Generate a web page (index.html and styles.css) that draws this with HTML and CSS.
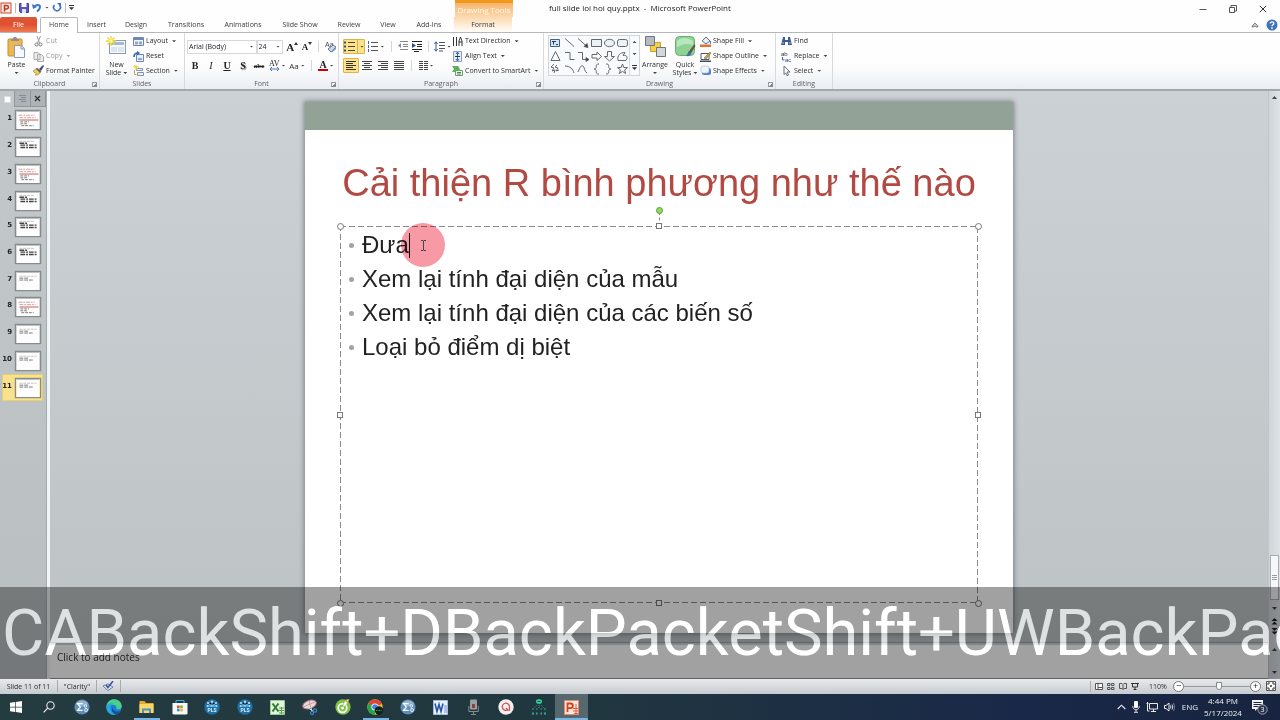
FILE: index.html
```html
<!DOCTYPE html>
<html lang="en">
<head>
<meta charset="utf-8">
<title>full slide loi hoi quy.pptx - Microsoft PowerPoint</title>
<link rel="stylesheet" href="styles.css">
</head>
<body>
<svg class="defs" aria-hidden="true">
  <symbol id="pls" viewBox="0 0 16 16"><circle cx="8" cy="8" r="7.7" fill="#1d6fa5"/><g stroke="#8fd0f0" stroke-width="1"><path d="M8 2v6M4 4l4 3 4-3M3 7h10"/></g><g fill="#a8def5"><circle cx="8" cy="2.6" r="1.2"/><circle cx="4" cy="4" r="1.1"/><circle cx="12" cy="4" r="1.1"/><circle cx="3.5" cy="7" r="1"/><circle cx="12.5" cy="7" r="1"/></g><text x="8" y="13.4" font-size="5" font-weight="700" text-anchor="middle" fill="#d8f0fb" font-family="Roboto, sans-serif">PLS</text></symbol>
  <symbol id="sigma" viewBox="0 0 16 16"><circle cx="8" cy="8" r="7.6" fill="#5f8eb8"/><path d="M2 5a7 7 0 0 1 12 0c-3 3-9 3-12 0z" fill="#a9c6de" opacity=".7"/><path d="M8.600 4.600H3.600L6.400 8l-2.800 3.400h5" fill="none" stroke="#fff" stroke-width="1.200"/><g fill="none" stroke="#e4eff8"><circle cx="11.400" cy="7" r="1.300"/><circle cx="12" cy="11" r="1.500"/></g></symbol>
  <symbol id="th-red" viewBox="0 0 24 19"><rect width="24" height="19" fill="#fdfdfd"/><path d="M0 .5h24" stroke="#b5bbb8"/><path d="M2 4.500h17M3 7h17" stroke="#d69a98" stroke-dasharray="4 1 2 1"/><path d="M3 9.500h20" stroke="#bd5653"/><path d="M4 11.500h9M4 13.500h8M5 15.500h13" stroke="#777" stroke-dasharray="3 1"/></symbol>
  <symbol id="th-text" viewBox="0 0 24 19"><rect width="24" height="19" fill="#fdfdfd"/><path d="M0 .5h24" stroke="#b5bbb8"/><path d="M3 3.500h15" stroke="#c3b5b5" stroke-dasharray="3 1"/><path d="M3 5.500h9M4 7.500h17M4 10h18" stroke="#444" stroke-width="1.500" stroke-dasharray="5 1 2 1"/></symbol>
  <symbol id="th-light" viewBox="0 0 24 19"><rect width="24" height="19" fill="#fdfdfd"/><path d="M0 .5h24" stroke="#b5bbb8"/><path d="M3 4.500h18" stroke="#cbbcbc" stroke-dasharray="3 1"/><path d="M3 6.500h9M3 8.500h14" stroke="#777" stroke-dasharray="4 1"/></symbol>
</svg>

<header class="titlebar">
  <div class="title-left">
    <div class="quick">
      <svg width="12" height="12" viewBox="0 0 12 12"><rect x="1" y="1" width="10" height="10" fill="#fbe9e4" stroke="#c6492c"/><path d="M4.500 9.500V3.500h2.200a1.700 1.700 0 0 1 0 3.400H4.500" fill="none" stroke="#c23a1c" stroke-width="1.500"/></svg>
      <i class="qsep"></i>
      <button class="plain" aria-label="Save"><svg width="10" height="10" viewBox="0 0 10 10"><path d="M.5.5h9v9h-8l-1-1z" fill="#5b57b5" stroke="#45419a"/><path d="M2.500 0h5v4h-5z" fill="#fff"/><path d="M3 6h4v4H3z" fill="#dfe4f5"/></svg></button>
      <button class="plain" aria-label="Undo"><svg width="10" height="10" viewBox="0 0 10 10"><path d="M2 4c2-3 6-2.500 6 0 0 2-1 3-3 4.500" fill="none" stroke="#3d74c4" stroke-width="2"/><path d="M0 1l1 5 4-2z" fill="#3d74c4"/></svg></button>
      <i class="caret"></i>
      <button class="plain" aria-label="Redo"><svg width="10" height="10" viewBox="0 0 10 10"><path d="M2.500 2a3.400 3.400 0 1 0 5 0" fill="none" stroke="#3d74c4" stroke-width="1.700"/><path d="M5 0h4v4z" fill="#3d74c4"/></svg></button>
      <i class="qsep"></i>
      <i class="caret lined"></i>
    </div>
    <div class="context">Drawing Tools</div>
  </div>
  <div class="doc-title">full slide loi hoi quy.pptx &nbsp;-&nbsp; Microsoft PowerPoint</div>
  <div class="window-buttons">
    <button class="plain" aria-label="Minimize"><svg width="8" height="8" viewBox="0 0 8 8"><path d="M.5 4.500h7" stroke="#555"/></svg></button>
    <button class="plain" aria-label="Restore"><svg width="8" height="8" viewBox="0 0 8 8"><path d="M.5 2.500h5v5h-5zM2 2V.5h5.500V6H6" fill="none" stroke="#555"/></svg></button>
    <button class="plain" aria-label="Close"><svg width="8" height="8" viewBox="0 0 8 8"><path d="M.8.800l6.400 6.400M7.200.800L.8 7.200" stroke="#333"/></svg></button>
  </div>
</header>

<nav class="tabs">
  <button class="tab file">File</button>
  <button class="tab home">Home</button>
  <button class="tab w37">Insert</button>
  <button class="tab w42">Design</button>
  <button class="tab w58">Transitions</button>
  <button class="tab w56">Animations</button>
  <button class="tab w58">Slide Show</button>
  <button class="tab w40">Review</button>
  <button class="tab w38">View</button>
  <button class="tab w44">Add-Ins</button>
  <button class="tab format">Format</button>
  <div class="tabs-end">
    <svg width="8" height="6" viewBox="0 0 8 6"><path d="M1 4.500L4 1.200l3 3.300c-1 .8-1.500.5-3-.7-1.500 1.200-2 1.500-3 .7z" fill="none" stroke="#555"/></svg>
    <svg width="12" height="12" viewBox="0 0 12 12"><circle cx="6" cy="6" r="5.500" fill="#3f74bd"/><path d="M4.200 4.600c0-2.400 3.600-2.300 3.600-.2 0 1.300-1.800 1.300-1.800 2.800" fill="none" stroke="#fff" stroke-width="1.300"/><circle cx="6" cy="9.100" r=".9" fill="#fff"/></svg>
  </div>
</nav>

<main class="ribbon">
  <section class="group g-clip">
    <div class="g-body">
      <button class="big"><svg width="19" height="22" viewBox="0 0 19 22"><rect x="1" y="3" width="14" height="17" rx="1" fill="#edb64f" stroke="#c98e2d"/><path d="M4 5V3h2c0-3 4-3 4 0h2v2z" fill="#8c8f94"/><path d="M7.500 9.500h7l3 3v9h-10z" fill="#f7fafd" stroke="#8b9db3"/><path d="M14 9.500v3.500h3.500" fill="#cfd9e6" stroke="#8b9db3"/></svg><span>Paste</span><i class="caret"></i></button>
      <div class="col">
        <button class="item off"><svg width="11" height="11" viewBox="0 0 11 11"><path d="M4 0l2.500 7M7.500 0L4.500 7" stroke="#999" fill="none"/><circle cx="3.500" cy="8.500" r="1.500" fill="none" stroke="#777"/><circle cx="7.500" cy="8.500" r="1.500" fill="none" stroke="#777"/></svg>Cut</button>
        <button class="item off"><svg width="11" height="11" viewBox="0 0 11 11"><path d="M1 1.500h4l2 2v5H1zM4.500 3.500h4l2 2v5h-6z" fill="#ececec" stroke="#aaa"/></svg>Copy<i class="caret"></i></button>
        <button class="item"><svg width="11" height="11" viewBox="0 0 11 11"><path d="M6 4l4-4 1 1-3 5z" fill="#3b4f74"/><path d="M0 6l4-3 4 3c-1 3-3 4.500-6 4 2-1 2-2 0-2z" fill="#efcd54" stroke="#9b842c" stroke-width=".6"/><path d="M4 3l4 3-1 2-4-4z" fill="#55627b"/></svg>Format Painter</button>
      </div>
    </div>
    <footer>Clipboard<i class="launch"></i></footer>
  </section>

  <section class="group g-slides">
    <div class="g-body">
      <button class="big"><svg width="21" height="22" viewBox="0 0 21 22"><rect x="3.500" y="4.500" width="16" height="13" fill="#f6f9fc" stroke="#8c9cb0"/><path d="M5 6h13v3H5z" fill="#a8b9d2"/><path d="M5 11h6v5H5zM12 11h6v5h-6z" fill="#dce4ee"/><path d="M5 0v10M0 5h10M1.500 1.500l7 7M8.500 1.500l-7 7" stroke="#f0d52c" stroke-width="1.300"/><circle cx="5" cy="5" r="1.800" fill="#fff8ae"/></svg><span>New</span><span class="row">Slide<i class="caret"></i></span></button>
      <div class="col">
        <button class="item"><svg width="11" height="11" viewBox="0 0 11 11"><path d="M.5 1.500h10v8H.5z" fill="#f2f6fb" stroke="#7288aa"/><path d="M1 2h9v2H1z" fill="#7288aa"/><path d="M2 5.500h3v3H2zM6 5.500h3v3H6z" fill="#8da9d2"/></svg>Layout<i class="caret"></i></button>
        <button class="item"><svg width="11" height="11" viewBox="0 0 11 11"><path d="M3.500 3.500h7v7h-7z" fill="#e9f0f8" stroke="#7288aa"/><path d="M5 7h4v2H5z" fill="#88a8d5"/><path d="M1 6c0-3 1-4 4-4" fill="none" stroke="#2f66b8" stroke-width="1.700"/><path d="M4 0l3 2-3 2.500z" fill="#2f66b8"/></svg>Reset</button>
        <button class="item"><svg width="11" height="11" viewBox="0 0 11 11"><path d="M3.500 3.500h6v2h-6zM4.500 7.500h6v3h-6z" fill="#e9f0f8" stroke="#8294af"/><path d="M0 2h6M3 0v5M1 0l4 4" stroke="#e9cf35"/><path d="M1.500 5v4.500h2" stroke="#caa73c" fill="none"/></svg>Section<i class="caret"></i></button>
      </div>
    </div>
    <footer>Slides</footer>
  </section>

  <section class="group g-font">
    <div class="g-body stack">
      <div class="frow">
        <label class="combo fam"><select aria-label="Font"><option>Arial (Body)</option></select><i class="caret"></i></label>
        <label class="combo size"><select aria-label="Font size"><option>24</option></select><i class="caret"></i></label>
        <button class="cell w15 serif grow" aria-label="Grow font">A<svg width="4" height="4" viewBox="0 0 4 4"><path d="M0 3l2-3 2 3z" fill="#333"/></svg></button>
        <button class="cell w15 serif shrink" aria-label="Shrink font">A<svg width="4" height="4" viewBox="0 0 4 4"><path d="M0 0l2 3 2-3z" fill="#333"/></svg></button>
        <i class="vsep"></i>
        <button class="cell w15" aria-label="Clear formatting"><svg width="12" height="12" viewBox="0 0 12 12"><text x="0" y="6" font-size="7" font-family="Liberation Sans, sans-serif" fill="#444">Aa</text><path d="M3 8l5-4 3 2-5 5z" fill="#c9d8ec" stroke="#5b779e"/><path d="M6 10.500l5-4.500v2l-4 3.500z" fill="#7794bb"/></svg></button>
      </div>
      <div class="frow">
        <button class="cell w16 serif b">B</button>
        <button class="cell w16 serif i">I</button>
        <button class="cell w16 serif u">U</button>
        <button class="cell w16 serif s">S</button>
        <button class="cell w16 serif st">abc</button>
        <button class="cell w20" aria-label="Character spacing"><svg width="11" height="11" viewBox="0 0 11 11"><text x="0" y="6" font-size="8" font-family="Liberation Serif, serif" fill="#222">AV</text><path d="M1 9h9M3 7L1 9l2 2M8 7l2 2-2 2" stroke="#4a78b9" fill="none"/></svg><i class="caret"></i></button>
        <button class="cell w20 case">Aa<i class="caret"></i></button>
        <i class="vsep"></i>
        <button class="cell w20 serif color"><span>A</span><i class="caret"></i></button>
      </div>
    </div>
    <footer>Font<i class="launch"></i></footer>
  </section>

  <section class="group g-para">
    <div class="g-body">
      <div class="stack para-left">
        <div class="frow">
          <button class="cell hot w23" aria-label="Bullets"><svg width="11" height="11" viewBox="0 0 11 11"><path d="M4 1.500h7M4 5.500h7M4 9.500h7" stroke="#444"/><path d="M0 .5h2v2H0zM0 4.500h2v2H0zM0 8.500h2v2H0z" fill="#3b4d78"/></svg><i class="split"></i><i class="caret"></i></button>
          <button class="cell w23" aria-label="Numbering"><svg width="11" height="11" viewBox="0 0 11 11"><path d="M4 1.500h7M4 5.500h7M4 9.500h7" stroke="#555"/><path d="M1.500 0v3M1.500 4v3M1.500 8v3" stroke="#3c68b0"/></svg><i class="caret"></i></button>
          <i class="vsep"></i>
          <button class="cell w15" aria-label="Decrease indent"><svg width="11" height="11" viewBox="0 0 11 11"><path d="M3 .5h8M6 3.500h5M6 5.500h5M3 8.500h8" stroke="#888"/><path d="M4 2L1 4.500 4 7z" fill="#7a8fb3"/></svg></button>
          <button class="cell w15" aria-label="Increase indent"><svg width="11" height="11" viewBox="0 0 11 11"><path d="M1 .5h10M6 3.500h5M6 5.500h5M1 8.500h10M3 10.500h5" stroke="#222"/><path d="M1 2l4 2.500L1 7z" fill="#264e91"/></svg></button>
          <i class="vsep"></i>
          <button class="cell w20" aria-label="Line spacing"><svg width="11" height="11" viewBox="0 0 11 11"><path d="M5 1.500h6M5 4.500h6M5 7.500h6M5 10h4" stroke="#555"/><path d="M2 1v9M.3 3L2 .8 3.700 3M.3 8L2 10.200 3.700 8" stroke="#2f5ca8" fill="none"/></svg><i class="caret"></i></button>
        </div>
        <div class="frow">
          <button class="cell hot w16" aria-label="Align left"><svg width="10" height="9" viewBox="0 0 10 9"><path d="M0 .5h10M0 2.500h7M0 4.500h10M0 6.500h7M0 8.500h10" stroke="#333"/></svg></button>
          <button class="cell w16" aria-label="Center"><svg width="10" height="9" viewBox="0 0 10 9"><path d="M0 .5h10M2 2.500h6M0 4.500h10M2 6.500h6M0 8.500h10" stroke="#444"/></svg></button>
          <button class="cell w16" aria-label="Align right"><svg width="10" height="9" viewBox="0 0 10 9"><path d="M0 .5h10M3 2.500h7M0 4.500h10M3 6.500h7M0 8.500h10" stroke="#444"/></svg></button>
          <button class="cell w16" aria-label="Justify"><svg width="10" height="9" viewBox="0 0 10 9"><path d="M0 .5h10M0 2.500h10M0 4.500h10M0 6.500h10M0 8.500h10" stroke="#444"/></svg></button>
          <i class="vsep"></i>
          <button class="cell w20" aria-label="Columns"><svg width="9" height="9" viewBox="0 0 9 9"><path d="M0 .5h4M0 2.500h4M0 4.500h4M0 6.500h4M0 8.500h4M5 .5h4M5 2.500h4M5 4.500h4M5 6.500h4M5 8.500h4" stroke="#444"/></svg><i class="caret"></i></button>
        </div>
      </div>
      <div class="col">
        <button class="item"><svg width="11" height="11" viewBox="0 0 11 11"><path d="M1.500 1v9M4.500 1v9" stroke="#333"/><path d="M7 10V5l1.500-4L10 5v5M7 6h3" stroke="#333" fill="none"/></svg>Text Direction<i class="caret"></i></button>
        <button class="item"><svg width="11" height="11" viewBox="0 0 11 11"><path d="M1.500.5h8v10h-8z" fill="#e2ebf6" stroke="#8ca0bf"/><path d="M5.500 1v9M4 3l1.500-2L7 3M4 8l1.500 2L7 8" stroke="#376bb5" fill="none"/><path d="M3 5.500h5" stroke="#333"/></svg>Align Text<i class="caret"></i></button>
        <button class="item"><svg width="11" height="11" viewBox="0 0 11 11"><path d="M0 1h6l2 3-2 3H0l2-3z" fill="#5fae59"/><path d="M3.500 5.500h7v5h-7z" fill="#f1f5fa" stroke="#6fa06c"/><path d="M5 7.500h4M5 9h4" stroke="#4d8b4a"/></svg>Convert to SmartArt<i class="caret"></i></button>
      </div>
    </div>
    <footer>Paragraph<i class="launch"></i></footer>
  </section>

  <section class="group g-draw">
    <div class="g-body">
      <div class="gallery">
        <svg width="80" height="39" viewBox="0 0 80 39" fill="none" stroke="#666">
          <path d="M1.500 3.500h9v7h-9z" fill="#d8e4f2" stroke="#466087"/><path d="M3 5.500h4M4.500 5.500v3M7 8.500h2" stroke="#253f6c"/>
          <path d="M16 2.500l9 8M29 2.500l9 8"/><path d="M39 11.500l-4-1 3-3z" fill="#333"/>
          <path d="M42.500 3.500h10v7h-10z" fill="#e9f1f9"/><ellipse cx="60.500" cy="7" rx="5" ry="3.700" fill="#e9f1f9"/><rect x="68.500" y="3.500" width="10" height="7" rx="2" fill="#e9f1f9"/>
          <path d="M6.500 15.500l4.500 9H2zM16 16.500h5v7h4.500M29 16.500h4.500v7H38"/><path d="M37 21.500l3 2-3 2z" fill="#333"/>
          <path d="M43 18.500h5v-2.500l4.500 4.500-4.500 4v-2.500h-5zM58.500 15.500h4v5h3l-5 4.500-5-4.500h3zM69 24.500c-1-5 2-8 7-8l-2 3c4-1 5 2 3 5z"/>
          <path d="M5 28l-3 3 3 1-2 3 3-1-1 3M8 29l-2 2 3 1-2 3 3-1M16 30c5 0 8 3 9 7M29 36c1-2 3-8 5-6s1 5 4 7M50 28c-4 0-2 2-3 4-.5 1-2 1-2 1s1.500 0 2 1c1 2-1 4 3 4M57 28c4 0 2 2 3 4 .5 1 2 1 2 1s-1.500 0-2 1c-1 2 1 4-3 4"/><path d="M73.500 28l1.300 3.500 3.700.1-2.900 2.300 1 3.600-3.100-2.100-3.100 2.100 1-3.600-2.900-2.300 3.700-.1z"/>
        </svg>
        <div class="gal-scroll"><i class="caret up"></i><i class="caret"></i><i class="caret lined"></i></div>
      </div>
      <button class="big w30"><svg width="21" height="22" viewBox="0 0 21 22"><path d="M5.500 6.500h10v9h-10z" fill="#f3cf4a" stroke="#c9a12c"/><path d="M.5.500h9v9h-9z" fill="#b7babf" stroke="#70757c"/><path d="M11.500 11.500h9v9h-9z" fill="#d4d7dc" stroke="#70757c"/></svg><span>Arrange</span><i class="caret"></i></button>
      <button class="big w30"><svg width="21" height="22" viewBox="0 0 21 22"><rect x=".5" y=".5" width="19" height="19" rx="4" fill="#8ed394" stroke="#66b26c"/><path d="M2 5c5-4 10-4 16 0v4C12 7 8 8 2 11z" fill="#b9e7bd"/><path d="M19.500 8l-6 8 2 2 5-8z" fill="#69573f"/><path d="M14 15l2.500 2c-1 3-3 3.500-6 3 2-1 2-3 3.500-5z" fill="#41719f"/></svg><span>Quick</span><span class="row">Styles<i class="caret"></i></span></button>
      <div class="col">
        <button class="item"><svg width="11" height="11" viewBox="0 0 11 11"><path d="M2 5l4-4 4 4-4 3z" fill="#e9eef5" stroke="#5f6f88"/><path d="M9 4c2 1 2 3 1 4" stroke="#3f70b8" fill="none"/><path d="M0 8.500h11V11H0z" fill="#e0742c"/></svg>Shape Fill<i class="caret"></i></button>
        <button class="item"><svg width="11" height="11" viewBox="0 0 11 11"><path d="M1 2.500h8v6H1z" fill="#fff" stroke="#556"/><path d="M4 7l6-6 1 1-5 6z" fill="#d9a53a" stroke="#6b5733" stroke-width=".5"/><path d="M0 9.500h11V11H0z" fill="#394e62"/></svg>Shape Outline<i class="caret"></i></button>
        <button class="item"><svg width="11" height="11" viewBox="0 0 11 11"><rect x="2" y="3" width="9" height="7" rx="2" fill="#5784c9"/><rect x="1" y="1" width="8" height="7" rx="2" fill="#f0f4fa" stroke="#9db3d4" stroke-width=".6"/></svg>Shape Effects<i class="caret"></i></button>
      </div>
    </div>
    <footer>Drawing<i class="launch"></i></footer>
  </section>

  <section class="group g-edit">
    <div class="g-body">
      <div class="col">
        <button class="item"><svg width="11" height="11" viewBox="0 0 11 11"><path d="M2 1h2v3h3V1h2l2 8H7V6H4v3H0z" fill="#3a5c93"/><path d="M1 7h2M8 7h2" stroke="#a8c0e2"/></svg>Find</button>
        <button class="item"><svg width="11" height="11" viewBox="0 0 11 11"><text x="0" y="5" font-size="6" font-family="Liberation Sans, sans-serif" fill="#333">ab</text><text x="4" y="11" font-size="6" font-family="Liberation Sans, sans-serif" fill="#274f8f">ac</text><path d="M1.500 6v3h2" stroke="#3a69ad" fill="none"/></svg>Replace<i class="caret"></i></button>
        <button class="item"><svg width="11" height="11" viewBox="0 0 11 11"><path d="M3 1l6 6H6l1.500 3-1.500.7L4.700 8 3 9.500z" fill="#fff" stroke="#66707e"/></svg>Select<i class="caret"></i></button>
      </div>
    </div>
    <footer>Editing</footer>
  </section>
</main>

<div class="work">
  <aside class="outline">
    <div class="pane-tabs">
      <button class="on" aria-label="Slides"><svg width="7" height="7" viewBox="0 0 7 7"><path d="M.5.500h6v6h-6z" fill="#fff" stroke="#d9dcde"/></svg></button>
      <button aria-label="Outline"><svg width="7" height="7" viewBox="0 0 7 7"><path d="M0 .5h7M2 2.500h5M0 4.500h7M2 6.500h5" stroke="#858b90"/></svg></button>
      <button aria-label="Close pane"><svg width="7" height="7" viewBox="0 0 7 7"><path d="M1 1l5 5M6 1L1 6" stroke="#333" stroke-width="1.300"/></svg></button>
    </div>
    <ol class="thumbs">
      <li><b>1</b><svg><use href="#th-red"/></svg></li>
      <li><b>2</b><svg><use href="#th-text"/></svg></li>
      <li><b>3</b><svg><use href="#th-red"/></svg></li>
      <li><b>4</b><svg><use href="#th-text"/></svg></li>
      <li><b>5</b><svg><use href="#th-text"/></svg></li>
      <li><b>6</b><svg><use href="#th-text"/></svg></li>
      <li><b>7</b><svg><use href="#th-light"/></svg></li>
      <li><b>8</b><svg><use href="#th-red"/></svg></li>
      <li><b>9</b><svg><use href="#th-light"/></svg></li>
      <li><b>10</b><svg><use href="#th-light"/></svg></li>
      <li class="current"><b>11</b><svg><use href="#th-light"/></svg></li>
    </ol>
  </aside>
  <div class="editor">
    <div class="canvas">
      <article class="slide">
        <div class="band"></div>
        <h1>Cải thiện R bình phương như thế nào</h1>
        <div class="placeholder">
          <svg class="frame" width="100%" height="100%" aria-hidden="true"><rect width="100%" height="100%" fill="none" stroke="#8a8a8a" stroke-width="2" stroke-dasharray="6 3"/></svg>
          <ul>
            <li>Đưa<i class="text-caret"></i></li>
            <li>Xem lại tính đại diện của mẫu</li>
            <li>Xem lại tính đại diện của các biến số</li>
            <li>Loại bỏ điểm dị biệt</li>
          </ul>
          <i class="stem"></i><i class="h rot"></i>
          <i class="h round tl"></i><i class="h tc"></i><i class="h round tr"></i>
          <i class="h ml"></i><i class="h mr"></i>
          <i class="h round bl"></i><i class="h bc"></i><i class="h round br"></i>
          <div class="pointer"><svg width="7" height="11" viewBox="0 0 7 11"><path d="M1 .5h2l.5.500.5-.5h2M3.500 1v9M1 10.500h2l.5-.5.5.500h2" fill="none" stroke="#444"/></svg></div>
        </div>
      </article>
    </div>
    <div class="notes">Click to add notes</div>
  </div>
  <div class="scroll">
    <i class="caret up big-caret"></i>
    <div class="thumb"><svg width="5" height="6" viewBox="0 0 5 6"><path d="M0 .5h5M0 2.500h5M0 4.500h5" stroke="#999"/></svg></div>
    <i class="caret big-caret"></i>
    <svg width="7" height="18" viewBox="0 0 7 18"><path d="M.5 4l3-3 3 3zM.5 7.500l3-3 3 3zM.5 11l3 3 3-3zM.5 14.500l3 3 3-3z" fill="#222"/></svg>
    <div class="notes-scroll"><i class="caret up big-caret"></i><i class="caret big-caret"></i></div>
  </div>
</div>

<div class="keys">+CABackShift+DBackPacketShift+UWBackPac</div>

<footer class="status">
  <span class="s1">Slide 11 of 11</span>
  <span class="s2">"Clarity"</span>
  <span class="s3"><svg width="11" height="10" viewBox="0 0 11 10"><path d="M0 5l5-2 5 3-5 3.500z" fill="#dfe5f1" stroke="#6a7ba6"/><path d="M3 4l2 2.500L10 0" fill="none" stroke="#3b4fa0" stroke-width="1.500"/></svg></span>
  <div class="views">
    <svg width="8" height="7" viewBox="0 0 8 7"><path d="M.5.500h7v6h-7zM3 .5v6M3 4.500h4.500" fill="#fff" stroke="#555"/></svg>
    <svg width="8" height="7" viewBox="0 0 8 7"><path d="M.5.500h2.500v2H.5zM4.500.500H7v2H4.500zM.5 4.500h2.500v2H.5zM4.500 4.500H7v2H4.500z" fill="none" stroke="#555"/></svg>
    <svg width="8" height="7" viewBox="0 0 8 7"><path d="M.5.500h2.500l1 1 1-1h2.500v5H5l-1 1-1-1H.5zM4 1.500v5" fill="none" stroke="#555"/></svg>
    <svg width="8" height="7" viewBox="0 0 8 7"><path d="M0 .5h8M1.500 1v3h5V1M4 4v2.500M2.500 6.500h3" fill="none" stroke="#333"/></svg>
  </div>
  <span class="pct">110%</span>
  <button class="zoomb" aria-label="Zoom out">−</button>
  <input type="range" min="10" max="100" value="58" aria-label="Zoom">
  <button class="zoomb" aria-label="Zoom in">+</button>
  <button class="plain fit" aria-label="Fit slide"><svg width="10" height="10" viewBox="0 0 10 10"><path d="M.5.500h9v9h-9z" fill="#fff" stroke="#555"/><path d="M2 4V2h2M6 2h2v2M8 6v2H6M4 8H2V6M4 5h2M5 4v2" stroke="#333" fill="none"/></svg></button>
</footer>

<div class="taskbar">
  <div class="apps">
    <button aria-label="Start"><svg width="12" height="12" viewBox="0 0 12 12"><path d="M0 1.700l5.300-.7v4.700H0zM6 .9L12 0v5.700H6zM0 6.400h5.300V11L0 10.300zM6 6.400h6V12l-6-.9z" fill="#fff"/></svg></button>
    <button aria-label="Search"><svg width="12" height="12" viewBox="0 0 12 12"><circle cx="7.500" cy="4.500" r="3.700" fill="none" stroke="#eee" stroke-width="1.100"/><path d="M4.700 7.200L.7 11.300" stroke="#eee" stroke-width="1.200"/></svg></button>
    <button aria-label="Statistics"><svg width="16" height="16"><use href="#sigma"/></svg></button>
    <button aria-label="Edge"><svg width="16" height="16" viewBox="0 0 16 16"><circle cx="8" cy="8" r="7.700" fill="#1b7fd0"/><path d="M.3 8C1 2.500 5 0 8.500.3 13 .6 16 4 15.700 7.500c-.2 2.500-3 3.300-5.400 2.600.8-1.600 0-4.300-3.300-4.400C3.500 5.600 1 6.500.3 8z" fill="#4bd08b"/><path d="M.3 8C1 5 4.500 3.500 7.500 4.500c-3 1-4 4-2.500 7 1 2 3 3.200 5 3.900C5 17 .3 13.500.3 8z" fill="#27a7dc"/><path d="M6.500 8.500c0 3 3.500 5 7.500 3.500-1 1.700-2.500 3-4 3.400-3.500-1-5-4-3.500-6.900z" fill="#164f9c"/></svg></button>
    <button class="run" aria-label="File Explorer"><svg width="15" height="14" viewBox="0 0 15 14"><path d="M.5 1h5l1.500 2h7.500v10H.5z" fill="#e6a92b"/><path d="M.5 4h14v9H.5z" fill="#fbd865"/><path d="M3 13V8.500h9V13h-2v-2.500H5V13z" fill="#4f91cc"/></svg></button>
    <button aria-label="Store"><svg width="16" height="16" viewBox="0 0 16 16"><path d="M4 4V1.500h8V4" fill="none" stroke="#32b5e5"/><path d="M.5 4h15v10.500l-1 1h-13l-1-1z" fill="#f7f7f7"/><path d="M5 6.500h2.600v2.600H5z" fill="#e64b2b"/><path d="M8.200 6.500h2.600v2.600H8.200z" fill="#78b227"/><path d="M5 9.700h2.600v2.600H5z" fill="#2b92d8"/><path d="M8.200 9.700h2.600v2.600H8.200z" fill="#efb325"/></svg></button>
    <button aria-label="PLS 3"><svg width="16" height="16"><use href="#pls"/></svg></button>
    <button aria-label="PLS 4"><svg width="16" height="16"><use href="#pls"/></svg></button>
    <button aria-label="Excel"><svg width="15" height="15" viewBox="0 0 15 15"><path d="M.5.500h14v14H.5z" fill="#e4f3dd" stroke="#9ccb8f"/><path d="M2.500 3.500l6 8M8.500 3.500l-6 8" stroke="#2d7d32" stroke-width="2"/><path d="M9 8h5M9 10.500h5M9 13h5M11.500 7v7" stroke="#55a04e"/></svg></button>
    <button aria-label="Snipping Tool"><svg width="16" height="16" viewBox="0 0 16 16"><ellipse cx="7.500" cy="5.500" rx="7" ry="4" transform="rotate(-20 7.500 5.500)" fill="#e8dadd" stroke="#b4747c"/><path d="M1 8l12-5M7 1.500l2 8" stroke="#c38c92" stroke-width=".8"/><path d="M6 9l5 3M9 8l1 5" stroke="#c9d2da"/><circle cx="13" cy="11.500" r="1.700" fill="none" stroke="#3f83c5" stroke-width="1.200"/><circle cx="10" cy="14" r="1.500" fill="none" stroke="#3f83c5" stroke-width="1.200"/></svg></button>
    <button aria-label="Browser"><svg width="16" height="16" viewBox="0 0 16 16"><circle cx="8" cy="8" r="7.700" fill="#7cc243"/><circle cx="7.500" cy="9" r="4.300" fill="none" stroke="#fff" stroke-width="1.700"/><circle cx="7.500" cy="9" r="1.500" fill="#fff"/><path d="M8 8c0-4 2-7 6-8-1 3-2 6-6 8z" fill="#fff" stroke="#7cc243" stroke-width=".6"/><path d="M11 1l2 3" stroke="#e39b2c" stroke-width="1.500"/></svg></button>
    <button class="run" aria-label="Chrome"><svg width="17" height="16" viewBox="0 0 17 16"><circle cx="8" cy="8" r="7.700" fill="#f1c232"/><path d="M8 8L1.300 4.200A7.700 7.700 0 0 1 15 5z" fill="#dc4437"/><path d="M8 8l-6.700-3.800A7.700 7.700 0 0 0 8 15.700z" fill="#2ba24c"/><circle cx="8" cy="8" r="3.600" fill="#fff"/><circle cx="8" cy="8" r="2.800" fill="#3f82ec"/><circle cx="12" cy="11.500" r="4.200" fill="#11211c"/><path d="M9 11.500h6" stroke="#2e9a77" stroke-dasharray="1 .5"/></svg></button>
    <button aria-label="Statistics viewer"><svg width="16" height="16"><use href="#sigma"/></svg></button>
    <button aria-label="Word"><svg width="15" height="15" viewBox="0 0 15 15"><path d="M.5.500h14v14H.5z" fill="#e9f0fa" stroke="#a5bde0"/><path d="M2 3.500l2 8 2-7 2 7 2-8" fill="none" stroke="#2457a8" stroke-width="1.600"/><path d="M11 6h3M11 8h3M11 10h3M11 12h3" stroke="#6b94ce"/></svg></button>
    <button aria-label="Voice recorder"><svg width="12" height="16" viewBox="0 0 12 16"><rect x="2" y=".5" width="7" height="10" rx="1" fill="#9a9fa0"/><path d="M4 5h3v4H4z" fill="#8d403a"/><path d="M.8 7v5.500h9.500V7M5.500 12.500v3M3 15.500h5" fill="none" stroke="#84898a"/></svg></button>
    <button aria-label="Assistant"><svg width="16" height="16" viewBox="0 0 16 16"><circle cx="8" cy="8" r="7.700" fill="#f4eeee"/><path d="M9.500 11a3.600 3.600 0 1 1 2-3.500v4.300M8 9l2.500 2.500" fill="none" stroke="#c8505a" stroke-width="1.200"/></svg></button>
    <button aria-label="Model tool"><svg width="16" height="16" viewBox="0 0 16 16"><ellipse cx="8" cy="2.500" rx="3" ry="2.300" fill="#36d6a0"/><path d="M6.500 2.500h3" stroke="#17453b"/><path d="M5.500 6.500L3.500 8.500M10.500 6.500l2 2M8 6v3" stroke="#2fae87" stroke-dasharray="1 1"/><g fill="#2fae87"><path d="M1 9.500h2v1H1zM5 9.500h1.500v1H5zM9.500 9.500H11v1H9.500zM13 9.500h2v1h-2zM1 13.500h2v2H1zM5 13.500h1.500v2H5zM9.500 13.500H11v2H9.500zM13 13.500h2v2h-2z"/></g></svg></button>
    <button class="run active" aria-label="PowerPoint"><svg width="15" height="15" viewBox="0 0 15 15"><path d="M.5.500h14v14H.5z" fill="#fbe4db" stroke="#e58a6b"/><path d="M3.500 12V3.500h3a2.300 2.300 0 0 1 0 4.700h-3" fill="none" stroke="#cd4218" stroke-width="1.800"/><path d="M9 8.500h5M9 11h5M10 13.500h4M12 4v9" stroke="#d76340"/></svg></button>
  </div>
  <div class="tray">
    <svg width="9" height="6" viewBox="0 0 9 6"><path d="M.7 5l3.800-3.800L8.300 5" fill="none" stroke="#eee" stroke-width="1.100"/></svg>
    <svg width="8" height="12" viewBox="0 0 8 12"><rect x="2" y="0" width="4" height="7" rx="1" fill="#fff"/><path d="M.7 5c0 5 6.600 5 6.600 0M4 8.500V11M2 11.300h4" fill="none" stroke="#ddd"/></svg>
    <svg width="12" height="12" viewBox="0 0 12 12"><path d="M3.500 2.500h8v5.500h-8zM7.500 8v2.500M5 10.500h5M1.500 1v3.500M.5 2.500h2M1.500 4v6h2" fill="none" stroke="#e8e8e8"/></svg>
    <svg width="11" height="10" viewBox="0 0 11 10"><path d="M.5 3.500h1.500l3-2.500v8L2 6.500H.5z" fill="none" stroke="#eee"/><path d="M6.500 3.500q1 1.500 0 3M8 2.500q1.700 2.500 0 5" fill="none" stroke="#ddd"/><path d="M9.500 1q2.500 4 0 8" fill="none" stroke="#778"/></svg>
    <span class="lang">ENG</span>
    <span class="clock">4:44 PM<br>5/17/2024</span>
    <svg width="17" height="16" viewBox="0 0 17 16"><path d="M1 1h11v9H6l-2 2v-2H1z" fill="#f2f2f2"/><path d="M2.500 3.500h8M2.500 5.500h8M2.500 7.500h5" stroke="#1a2542"/><circle cx="11.500" cy="10.500" r="4.700" fill="#28334a" stroke="#9aa3b3"/><text x="11.500" y="13" font-size="7" text-anchor="middle" fill="#fff" font-family="Open Sans, sans-serif">3</text></svg>
  </div>
</div>
</body>
</html>
```
FILE: styles.css
```css
* { box-sizing: border-box; }
html, body { height: 100%; }
body {
  margin: 0;
  display: flex;
  flex-direction: column;
  overflow: hidden;
  position: relative;
  background: #fefefe;
  color: #2e2e2e;
  font: 7px/10px "Open Sans", "Noto Sans", sans-serif;
}
button { border: 0; padding: 0; margin: 0; background: none; color: inherit; font: inherit; }
svg { flex: none; display: block; }
i { font-style: normal; }
svg.defs { display: none; }
.plain { display: flex; }

.caret {
  flex: none;
  width: 4px;
  height: 2px;
  background: #444;
  clip-path: polygon(0 0, 100% 0, 50% 100%);
}
.caret.up { clip-path: polygon(50% 0, 100% 100%, 0 100%); }
.caret.lined {
  width: 5px;
  height: 5px;
  background: #333;
  clip-path: polygon(0 0, 100% 0, 100% 20%, 0 20%, 0 45%, 100% 45%, 50% 100%, 0 45%);
}
.caret.big-caret { width: 5px; height: 3px; }

/* title bar */
.titlebar { flex: none; height: 17px; display: grid; grid-template-columns: 1fr auto 1fr; }
.title-left { display: flex; min-width: 0; }
.quick { width: 455px; flex: none; display: flex; align-items: center; gap: 3px; height: 15px; }
.qsep { width: 1px; height: 10px; background: #bbb; }
.context {
  width: 58px;
  flex: none;
  border-top: 3px solid #f39a1d;
  background: linear-gradient(#f7b56b, #fbd9b0);
  color: #fff8ee;
  text-align: center;
  line-height: 14px;
  font-size: 8px;
}
.doc-title { font-size: 8px; line-height: 16px; color: #222; }
.window-buttons { display: flex; justify-content: flex-end; align-items: center; gap: 22px; padding-right: 13px; }

/* tabs */
.tabs { flex: none; display: flex; height: 16px; border-bottom: 1px solid #b4b8bd; }
.tab { height: 15px; line-height: 15px; text-align: center; color: #3c3c3c; }
.tab.file { width: 37px; margin-right: 3px; background: linear-gradient(#d9573a, #e0502f 50%, #ee7b51); color: #fff; border-radius: 2px 2px 0 0; }
.tab.home { width: 38px; height: 16px; line-height: 13px; padding-bottom: 2px; background: #fff; border: 1px solid #b4b8bd; border-bottom: 0; border-radius: 2px 2px 0 0; }
.w37 { width: 37px; } .w42 { width: 42px; } .w58 { width: 58px; } .w56 { width: 56px; }
.w40 { width: 40px; } .w38 { width: 38px; } .w44 { width: 44px; }
.tab.format { width: 58px; margin-left: 3px; background: linear-gradient(#fbd9b0, #fffdf9); }
.tabs-end { margin-left: auto; display: flex; align-items: center; gap: 7px; padding-right: 2px; }

/* ribbon */
.ribbon {
  flex: none;
  display: flex;
  height: 58px;
  background: linear-gradient(#fff, #fdfdfe 60%, #e9edf2);
  border-bottom: 2px solid #a3a8ad;
}
.group { display: flex; flex-direction: column; border-right: 1px solid #d7dbe0; }
.g-body { flex: none; height: 45px; display: flex; padding-top: 1px; }
.g-body.stack, .stack { padding-top: 6px; }
.group footer { text-align: center; color: #5c5f64; position: relative; line-height: 12px; }
.launch { position: absolute; right: 2px; top: 4px; width: 5px; height: 5px; border: solid #999; border-width: 1px 0 0 1px; background: linear-gradient(135deg, transparent 50%, #888 50%); }
.g-clip { width: 100px; }
.g-slides { width: 85px; }
.g-font { width: 154px; }
.g-para { width: 205px; }
.g-draw { width: 232px; }
.g-edit { width: 57px; }
.big { width: 33px; display: flex; flex-direction: column; align-items: center; line-height: 8px; padding-top: 2px; }
.big svg { margin-bottom: 3px; }
.big .caret { margin-top: 3px; }
.row { display: flex; align-items: center; gap: 2px; }
.big .row .caret { margin-top: 0; }
.w30 { width: 30px; }
.col { display: flex; flex-direction: column; }
.item { display: flex; align-items: center; gap: 2px; height: 15px; white-space: nowrap; }
.item .caret { margin-left: 2px; }
.off { color: #9b9b9b; }
.off .caret { background: #aaa; }
.stack { display: flex; flex-direction: column; gap: 4px; }
.frow { display: flex; align-items: center; height: 15px; }
.g-font .g-body { padding-left: 2px; }
.combo { display: flex; align-items: center; height: 14px; border: 1px solid #d5d8dc; background: #fff; padding-right: 2px; }
.combo select { appearance: none; border: 0; background: none; flex: 1; min-width: 0; padding: 0 0 0 1px; font: inherit; color: #222; }
.fam { width: 71px; }
.size { width: 27px; margin-right: 2px; }
.cell { display: flex; align-items: center; justify-content: center; gap: 2px; height: 15px; }
.w15 { width: 15px; } .w16 { width: 16px; } .w20 { width: 20px; } .w23 { width: 23px; }
.serif { font-family: "Liberation Serif", serif; font-weight: 700; font-size: 10px; color: #222; }
.grow { font-size: 11px; gap: 0; }
.shrink { font-size: 9px; gap: 0; }
.grow svg, .shrink svg { align-self: flex-start; margin-top: 3px; }
.i { font-style: italic; font-weight: 400; }
.u { text-decoration: underline; }
.s { text-shadow: 1px 1px 1px #777; }
.st { font-size: 7px; text-decoration: line-through; }
.case { font-size: 8px; }
.color span { border-bottom: 2px solid #c00; line-height: 8px; padding: 0 1px; }
.vsep { width: 1px; height: 11px; background: #d3d6da; margin: 0 4px; flex: none; }
.hot { background: #fde28a; border: 1px solid #d9b44c; border-radius: 1px; }
.split { width: 1px; align-self: stretch; background: #d9b44c; }
.para-left { width: 113px; padding-left: 4px; }
.para-left.stack { padding-top: 5px; }
.gallery { display: flex; margin: 1px 0 0 4px; height: 41px; border: 1px solid #cfd4da; background: #f8fbfe; }
.gal-scroll { width: 10px; display: flex; flex-direction: column; align-items: center; justify-content: space-around; border-left: 1px solid #d5d9de; }
.g-edit .col { padding-left: 5px; }

/* workspace */
.work { flex: 1; min-height: 0; display: flex; background: linear-gradient(#ccd1d5, #bcc2c4); }
.outline { width: 47px; flex: none; border-right: 1px solid #a4aaae; background: linear-gradient(#c3c8cb, #b9bfc1); }
.pane-tabs { display: flex; height: 16px; }
.pane-tabs button { flex: 1; display: flex; align-items: center; justify-content: center; background: #aeb3b7; border-right: 1px solid #8f9599; border-bottom: 1px solid #8f9599; }
.pane-tabs .on { background: none; border-bottom: 0; }
.thumbs { list-style: none; margin: 0; padding: 0; height: 294px; display: grid; grid-auto-rows: 1fr; }
.thumbs li { display: flex; align-items: center; gap: 3px; margin: 0 3px 0 2px; font-size: 8px; color: #222; }
.thumbs b { width: 10px; text-align: right; line-height: 10px; margin-bottom: 4px; font-family: "DejaVu Sans", sans-serif; font-size: 7px; }
.thumbs svg { width: 26px; height: 20px; border: 1px solid #858b8f; box-shadow: 0 0 1px #777; }
.thumbs .current { background: #f8e28d; box-shadow: inset 0 0 0 1px #e8cf6c; border-radius: 2px; }
.editor { flex: 1; min-width: 0; display: flex; flex-direction: column; border-left: 3px solid #f2f4f5; }
.canvas { flex: 1; min-height: 0; display: flex; justify-content: center; padding: 11px 0 10px; }
.slide { height: 100%; aspect-ratio: 4 / 3; background: #fff; box-shadow: 0 0 5px 1px #7b8286; display: flex; flex-direction: column; }
.band { flex: none; height: 28px; background: #93a297; }
.slide h1 { flex: none; margin: 29px 0 0; text-align: center; font: 400 38px/48px "Liberation Sans", Arial, sans-serif; color: #b24a43; white-space: nowrap; }
.placeholder { position: relative; flex: 1; margin: 19px 35px 30px; }
.frame { position: absolute; inset: 0; }
.placeholder ul { list-style: none; margin: 0; padding: 2px 0 0 22px; color: #222; font: 24px/34px "Liberation Sans", Arial, sans-serif; }
.placeholder li { position: relative; }
.placeholder li::before { content: ""; position: absolute; left: -13px; top: 15px; width: 5px; height: 5px; border-radius: 50%; background: #a3a3a3; }
.text-caret { display: inline-block; width: 1px; height: 25px; background: #000; vertical-align: -5px; }
.h { position: absolute; width: 6px; height: 6px; margin: -3px; background: #fff; border: 1px solid #777; }
.round, .rot { border-radius: 50%; width: 7px; height: 7px; }
.tl { left: 0; top: 0; } .tc { left: 50%; top: 0; } .tr { left: 100%; top: 0; }
.ml { left: 0; top: 50%; } .mr { left: 100%; top: 50%; }
.bl { left: 0; top: 100%; } .bc { left: 50%; top: 100%; } .br { left: 100%; top: 100%; }
.rot { left: 50%; top: -16px; background: #8fdc5c; border-color: #5b9c38; }
.stem { position: absolute; left: 50%; top: -14px; height: 14px; border-left: 1px dashed #888; }
.pointer { position: absolute; left: 61px; top: -3px; width: 44px; height: 44px; border-radius: 50%; background: #f89aa6; mix-blend-mode: multiply; display: flex; align-items: center; justify-content: center; }
.notes { flex: none; height: 36px; border-top: 2px solid #cfd2d4; border-bottom: 1px solid #999; background: #fff; color: #333; padding: 3px 7px; font: 10px/18px "Open Sans", sans-serif; box-shadow: 0 -1px 0 #9ba0a3; }
.scroll { width: 12px; flex: none; display: flex; flex-direction: column; align-items: center; gap: 7px; padding-top: 5px; background: linear-gradient(90deg, #cfd5d9, #dfe3e7); border-left: 1px solid #c1c6ca; }
.thumb { width: 9px; height: 45px; margin-top: auto; background: #f6f7f8; border: 1px solid #a8adb1; display: flex; align-items: center; justify-content: center; }
.notes-scroll { height: 37px; flex: none; display: flex; flex-direction: column; justify-content: space-between; padding: 6px 0 5px; }

/* keystroke banner */
.keys {
  position: absolute;
  left: 0;
  right: 0;
  bottom: 41px;
  height: 92px;
  overflow: hidden;
  white-space: nowrap;
  text-indent: -35px;
  font: 400 65px/92px Roboto, sans-serif;
  color: rgba(255, 255, 255, .4);
  mix-blend-mode: plus-lighter;
}
.work::after { content: ""; position: absolute; left: 0; right: 0; bottom: 41px; height: 92px; background: rgba(0, 0, 0, .37); }

/* status bar */
.status { flex: none; height: 15px; display: flex; align-items: center; background: linear-gradient(#e8eaec, #c6cbd0); line-height: 13px; padding-bottom: 1px; }
.status span { height: 12px; display: flex; align-items: center; justify-content: center; }
.s1 { width: 58px; border-right: 1px solid #aaa; }
.s2 { width: 39px; border-right: 1px solid #aaa; }
.s3 { width: 24px; border-right: 1px solid #aaa; }
.views { margin-left: auto; display: flex; gap: 4px; padding: 2px 4px; border-left: 1px solid #aaa; }
.pct { width: 30px; }
.zoomb { width: 11px; height: 11px; border: 1px solid #777; border-radius: 50%; background: #fff; line-height: 8px; font-size: 9px; color: #222; }
.status input { appearance: none; width: 66px; height: 10px; margin: 0; background: linear-gradient(#999, #999) center / 100% 1px no-repeat; }
.status input::-webkit-slider-thumb { appearance: none; width: 6px; height: 8px; background: #fff; border: 1px solid #888; border-radius: 0 0 3px 3px; }
.fit { margin: 0 4px 0 5px; }

/* taskbar */
.taskbar { flex: none; height: 26px; display: flex; justify-content: space-between; background: linear-gradient(90deg, #243b40, #21373f 45%, #192848 80%, #18243f); color: #f0f0f0; }
.apps { width: 588px; display: grid; grid-template-columns: repeat(18, 1fr); }
.apps button { display: flex; align-items: center; justify-content: center; }
.run { background: linear-gradient(#77b5e3, #77b5e3) bottom / 26px 2px no-repeat; }
.apps .active { background: linear-gradient(#77b5e3, #77b5e3) bottom / 100% 2px no-repeat, #56686e; }
.tray { display: flex; align-items: center; gap: 6px; padding-right: 12px; font-size: 8px; }
.lang { margin-left: 1px; }
.clock { text-align: center; line-height: 12px; width: 38px; margin-right: 3px; }
```
